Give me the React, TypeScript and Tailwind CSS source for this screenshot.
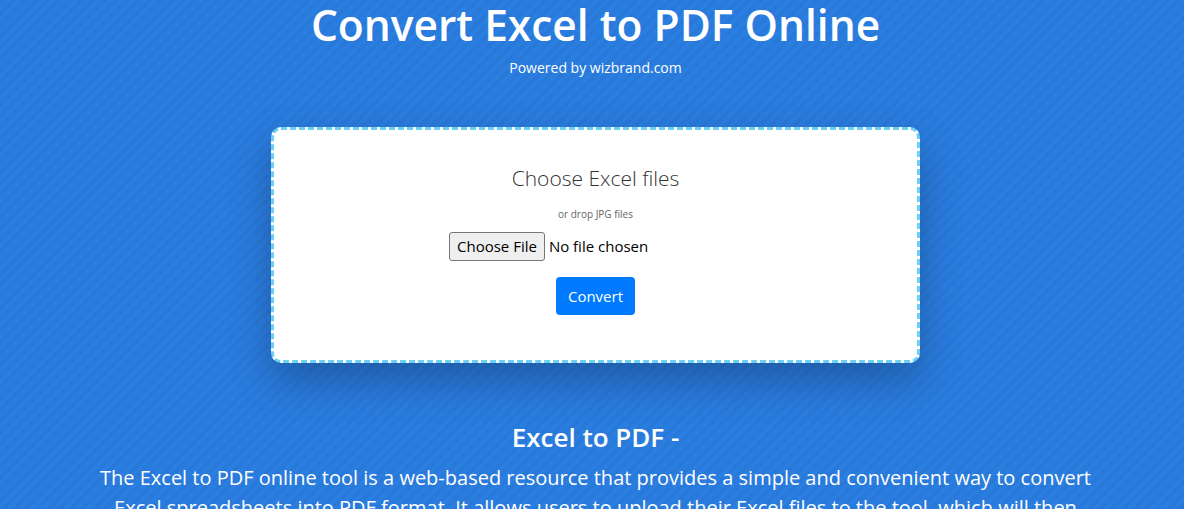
export default function App() {
    return (
        <div className="min-h-[509px] w-full bg-[#2a7de1] bg-[repeating-linear-gradient(135deg,rgba(0,0,0,0.035)_0px,rgba(0,0,0,0.035)_4px,transparent_4px,transparent_8px)] pl-[7px] text-white font-['Open_Sans',sans-serif] overflow-hidden">
            <header className="flex flex-col items-center">
                <h1 className="text-[42.5px] leading-[50px] font-semibold">
                    Convert Excel to PDF Online
                </h1>
                <p className="mt-[8px] text-[14px] leading-[20px]">
                    Powered by wizbrand.com
                </p>
            </header>

            <div className="mx-auto mt-[49px] w-[649px] h-[236px] rounded-[10px] border-[3px] border-dashed border-[#6ccff4] bg-white shadow-[0_18px_40px_rgba(0,0,0,0.25)] flex flex-col items-center text-[#212529]">
                <h3 className="mt-[33px] text-[21px] leading-[30px] font-light text-[#333]">
                    Choose Excel files
                </h3>
                <p className="mt-[14px] text-[10px] leading-[14px] text-[#666]">
                    or drop JPG files
                </p>
                <div className="mt-[11px] self-start ml-[175px] flex items-center gap-[4px] text-[15px] text-black">
                    <button className="h-[29px] px-[7px] border border-[#767676] rounded-[3px] bg-[#efefef] text-[15px]">
                        Choose File
                    </button>
                    <span>No file chosen</span>
                </div>
                <button className="mt-[16px] h-[38px] px-[12px] rounded-[4px] bg-[#007bff] text-white text-[15px]">
                    Convert
                </button>
            </div>

            <section className="mt-[56px] flex flex-col items-center">
                <h2 className="text-[26px] leading-[36px] font-semibold">Excel to PDF -</h2>
                <p className="mt-[8px] w-[1120px] text-center text-[20px] leading-[30px] whitespace-nowrap font-['Comic_Sans_MS','Open_Sans',sans-serif]">
                    The Excel to PDF online tool is a web-based resource that provides a simple and convenient way to convert
                    <br />
                    Excel spreadsheets into PDF format. It allows users to upload their Excel files to the tool, which will then
                    <br />
                    convert them into PDF documents.
                </p>
            </section>
        </div>
    );
}
